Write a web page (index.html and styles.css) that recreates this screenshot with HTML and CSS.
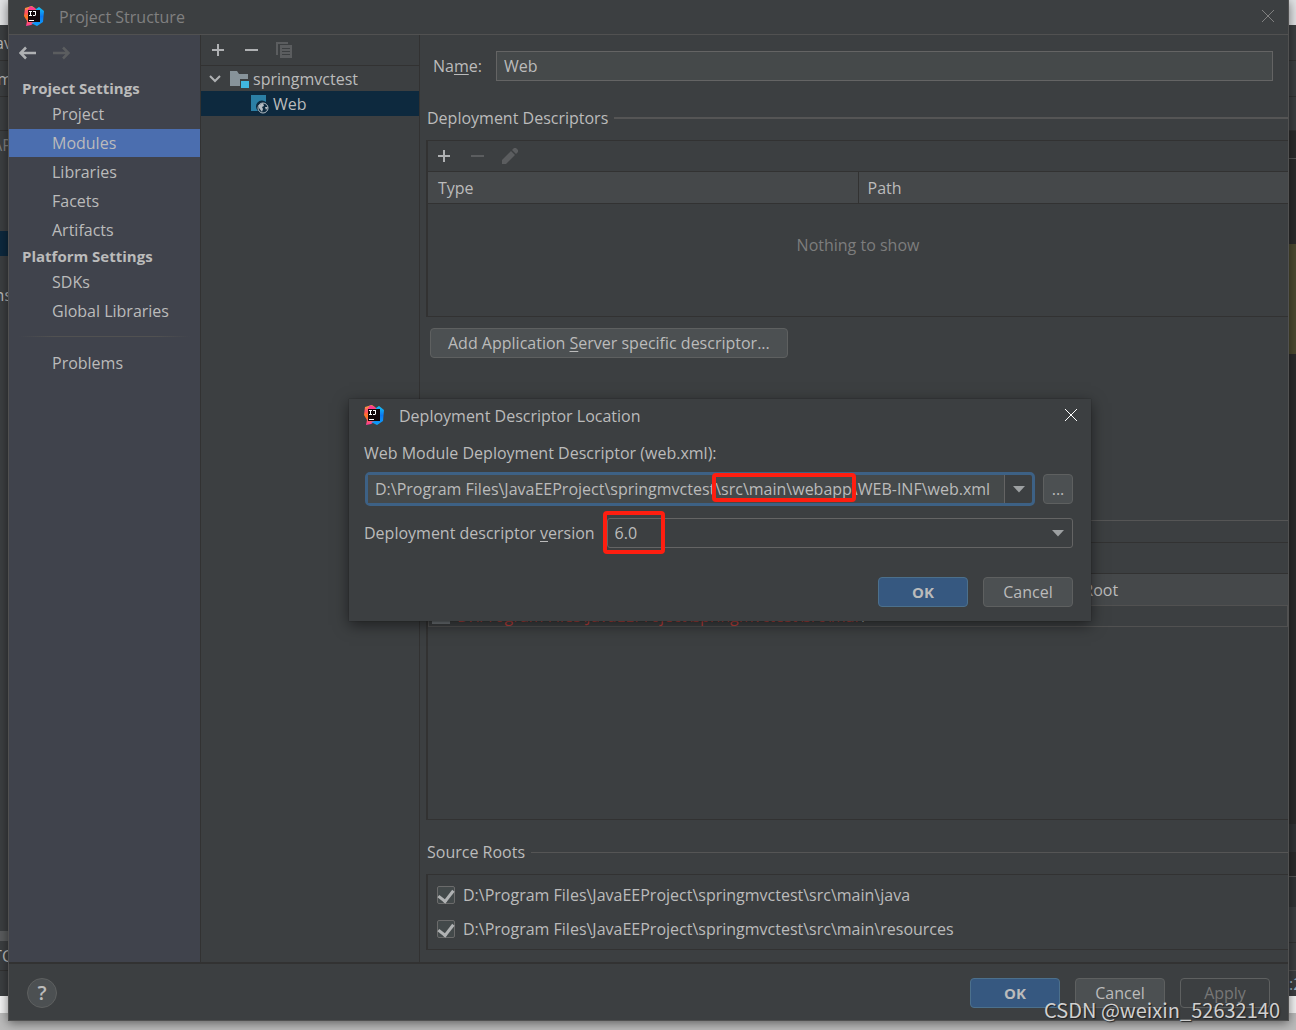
FILE: index.html
```html
<!DOCTYPE html>
<html lang="en">
<head>
<meta charset="utf-8">
<title>Project Structure</title>
<link rel="stylesheet" href="styles.css">
</head>
<body>
<svg class="defs" aria-hidden="true">
  <defs>
    <linearGradient id="warm" x1="0" y1="0" x2="0" y2="1">
      <stop offset="0" stop-color="#ffb02e"/><stop offset=".3" stop-color="#ff4d6a"/><stop offset=".55" stop-color="#ff7a1a"/><stop offset="1" stop-color="#ff3aa0"/>
    </linearGradient>
    <linearGradient id="cool" x1="0" y1="0" x2="0" y2="1">
      <stop offset="0" stop-color="#17c4f5"/><stop offset=".5" stop-color="#0a78f2"/><stop offset="1" stop-color="#0fa2fb"/>
    </linearGradient>
  </defs>
  <symbol id="idea" viewBox="0 0 20 20">
    <path fill="url(#warm)" d="M1 2 8 0l4 3v13l-5 3-5 1 1-5-3-5z"/>
    <path fill="#fc3d8f" d="M6 0l5 2 1 3H3z"/>
    <path fill="url(#cool)" d="M12 3l3-2 5 4-1 11-6 4-6-3 4-1z"/>
    <path fill="#130709" d="M4 4h12v12H4z"/>
    <path fill="#fff" d="M5 5h3v1H7v3h1v1H5V9h1V6H5zM9 5h3v4l-1 1H9V9h2V6H9zM5 14h5v1H5z"/>
  </symbol>
  <symbol id="plus" viewBox="0 0 16 16"><path fill="currentColor" d="M7 2h2v5h5v2H9v5H7V9H2V7h5z"/></symbol>
  <symbol id="minus" viewBox="0 0 16 16"><path fill="currentColor" d="M2 7h13v2H2z"/></symbol>
  <symbol id="arrow" viewBox="0 0 18 14"><path fill="none" stroke="currentColor" stroke-width="2.500" d="M17 7H2M7 1.500 1.500 7 7 12.500"/></symbol>
  <symbol id="cross" viewBox="0 0 14 14"><path fill="none" stroke="currentColor" d="M1 1l12 12M13 1 1 13"/></symbol>
  <symbol id="down" viewBox="0 0 12 8"><path fill="#9da0a2" d="M0 1h12L6 7.500z"/></symbol>
</svg>

<div class="desktop">
  <div class="ide ide-left" aria-hidden="true">
    <div class="band b25 light"></div>
    <div class="band b36 line">av</div>
    <div class="band b36 line">m</div>
    <div class="band b34 line"></div>
    <div class="band b28 dim">\P</div>
    <div class="band b72"></div>
    <div class="band b25 navy"></div>
    <div class="band b25"></div>
    <div class="band b28">ns</div>
    <div class="band grow"></div>
    <div class="band b10 thumb"></div>
    <div class="band b30 line">TC</div>
    <div class="band b25"></div>
    <div class="band b17 white"></div>
    <div class="band b17 grey"></div>
  </div>

  <main class="window">
    <header class="titlebar">
      <svg class="logo"><use href="#idea"/></svg>
      <h1>Project Structure</h1>
      <button class="plain close" aria-label="Close"><svg class="x"><use href="#cross"/></svg></button>
    </header>

    <div class="panes">
      <nav class="sidebar">
        <div class="history">
          <button class="plain" aria-label="Back"><svg class="arrow"><use href="#arrow"/></svg></button>
          <button class="plain" aria-label="Forward" disabled><svg class="arrow flip"><use href="#arrow"/></svg></button>
        </div>
        <h2>Project Settings</h2>
        <ul>
          <li><a href="#project">Project</a></li>
          <li><a href="#modules" class="active">Modules</a></li>
          <li><a href="#libraries">Libraries</a></li>
          <li><a href="#facets">Facets</a></li>
          <li><a href="#artifacts">Artifacts</a></li>
        </ul>
        <h2>Platform Settings</h2>
        <ul>
          <li><a href="#sdks">SDKs</a></li>
          <li><a href="#global">Global Libraries</a></li>
        </ul>
        <hr>
        <ul>
          <li><a href="#problems">Problems</a></li>
        </ul>
      </nav>

      <section class="tree">
        <div class="tools">
          <button class="plain" aria-label="Add"><svg class="i16"><use href="#plus"/></svg></button>
          <button class="plain" aria-label="Remove"><svg class="i16"><use href="#minus"/></svg></button>
          <button class="plain" aria-label="Copy" disabled><svg class="i16" viewBox="0 0 16 16"><path fill="currentColor" d="M0 0h12v2H2v11H0zM4 3h12v13H4z"/><path stroke="#3c3f41" d="M6 6.500h8M6 9.500h8M6 12.500h8"/></svg></button>
        </div>
        <div class="node">
          <svg class="chev" viewBox="0 0 12 8"><path fill="none" stroke="#afb1b3" stroke-width="2" d="M1 1l5 5 5-5"/></svg>
          <svg class="i20" viewBox="0 0 20 20"><path fill="#87939a" d="M1 2h7l2 3h9v5h-8v7H1z"/><path fill="#40b6e0" d="M12 12h8v7h-8z"/></svg>
          <span>springmvctest</span>
        </div>
        <div class="node child">
          <svg class="i20" viewBox="0 0 20 20"><path fill="#2b7fa5" d="M2 1h15v7a6 6 0 0 0-8 9H2z"/><circle cx="14" cy="14" r="5" fill="#0d293e" stroke="#b5bdc3"/><path fill="#b5bdc3" d="M10 11l4-2 1 3-2 1 1 2-1 3-3-4zM16 13l3 0-2 3z"/></svg>
          <span>Web</span>
        </div>
      </section>

      <section class="content">
        <div class="field">
          <label for="name">Na<u>m</u>e:</label>
          <input id="name" type="text" value="Web">
        </div>

        <h3 class="deploy">Deployment Descriptors</h3>
        <div class="box descriptors">
          <div class="tools">
            <button class="plain" aria-label="Add"><svg class="i16"><use href="#plus"/></svg></button>
            <button class="plain" aria-label="Remove" disabled><svg class="i16"><use href="#minus"/></svg></button>
            <button class="plain" aria-label="Edit" disabled><svg class="i18" viewBox="0 0 18 18"><path fill="currentColor" d="M0 13 9 4l4 4-9 9H0zM10 3l2-2h2l2 2v2l-2 2z"/></svg></button>
          </div>
          <table>
            <thead><tr><th>Type</th><th>Path</th></tr></thead>
            <tbody><tr><td colspan="2" class="empty">Nothing to show</td></tr></tbody>
          </table>
        </div>
        <button class="btn specific">Add Application <u>S</u>erver specific descriptor...</button>

        <h3 class="web">Web Resource Directories</h3>
        <div class="box resources">
          <div class="tools">
            <button class="plain" aria-label="Add"><svg class="i16"><use href="#plus"/></svg></button>
            <button class="plain" aria-label="Remove"><svg class="i16"><use href="#minus"/></svg></button>
          </div>
          <table>
            <thead><tr><th>Web Resource Directory</th><th>Path Relative to Deployment Root</th></tr></thead>
            <tbody><tr class="row"><td><div class="missing"><svg class="i18" viewBox="0 0 18 18"><path fill="#6e7478" d="M0 2h7l2 3h9v12H0z"/></svg><span>D:\Program Files\JavaEEProject\springmvctest\src\mai</span></div></td><td>/</td></tr></tbody>
          </table>
        </div>

        <h3 class="source">Source Roots</h3>
        <div class="box roots">
          <label><input type="checkbox" checked>D:\Program Files\JavaEEProject\springmvctest\src\main\java</label>
          <label><input type="checkbox" checked>D:\Program Files\JavaEEProject\springmvctest\src\main\resources</label>
        </div>
      </section>
    </div>

    <footer class="footer">
      <button class="help" aria-label="Help">?</button>
      <button class="btn primary">OK</button>
      <button class="btn">Cancel</button>
      <button class="btn" disabled>Apply</button>
    </footer>
  </main>

  <div class="ide ide-right" aria-hidden="true">
    <div class="band b25 light"></div>
    <div class="band b36 line"></div>
    <div class="band b36 line"></div>
    <div class="band b34 line"></div>
    <div class="band b28 code rule"></div>
    <div class="band b85 code"></div>
    <div class="band b110 olive"></div>
    <div class="band grow code"></div>
    <div class="band b28 shade"></div>
    <div class="band b25 code rule"></div>
    <div class="band b30 shade"></div>
    <div class="band b36 line"></div>
    <div class="band b28 rule"></div>
    <div class="band b25 tail">:2</div>
    <div class="band b17 white"></div>
    <div class="band b17 grey"></div>
  </div>
</div>

<div class="dialog" role="dialog" aria-labelledby="dlg-title">
  <header>
    <svg class="logo"><use href="#idea"/></svg>
    <h2 id="dlg-title">Deployment Descriptor Location</h2>
    <button class="plain close" aria-label="Close"><svg class="x"><use href="#cross"/></svg></button>
  </header>
  <label class="caption" for="path">Web Module Deployment Descriptor (web.xml):</label>
  <div class="path-row">
    <div class="combo">
      <input id="path" type="text" value="D:\Program Files\JavaEEProject\springmvctest\src\main\webapp\WEB-INF\web.xml">
      <button class="plain" aria-label="Recent paths"><svg class="tri"><use href="#down"/></svg></button>
    </div>
    <button class="btn browse" aria-label="Browse">...</button>
    <span class="mark mark-path"></span>
  </div>
  <div class="version-row">
    <label for="version">Deployment descriptor <u>v</u>ersion</label>
    <div class="select">
      <select id="version"><option>6.0</option></select>
      <svg class="tri"><use href="#down"/></svg>
      <span class="mark mark-version"></span>
    </div>
  </div>
  <div class="actions">
    <button class="btn primary">OK</button>
    <button class="btn">Cancel</button>
  </div>
</div>

<div class="watermark">CSDN @weixin_52632140</div>
</body>
</html>
```
FILE: styles.css
```css
* { box-sizing: border-box; }

body {
  margin: 0;
  background: #bbbbbb;
  color: #bbbbbb;
  font: 16px/20px "Open Sans", "Noto Sans", sans-serif;
}

h1, h2, h3, ul { margin: 0; padding: 0; font-size: 16px; font-weight: 400; }
ul { list-style: none; }
button, input, select { font: inherit; color: inherit; margin: 0; }
svg { display: block; flex: none; }
u { text-underline-offset: 2px; }
.defs { position: absolute; width: 0; height: 0; }

.desktop { display: flex; min-height: 100vh; }

/* Slivers of the editor behind the window */
.ide { display: flex; flex-direction: column; flex: none; overflow: hidden; background: #3c3f41; white-space: nowrap; }
.ide-left { width: 8px; }
.ide-right { width: 7px; }
.band { flex: none; display: flex; align-items: center; justify-content: flex-end; }
.ide-left .band { margin-right: -4px; }
.ide-right .band { justify-content: flex-start; }
.ide .grow { flex: 1; }
.b10 { height: 10px; }
.b17 { height: 17px; }
.b25 { height: 25px; }
.b28 { height: 28px; }
.b30 { height: 30px; }
.b34 { height: 34px; }
.b36 { height: 36px; }
.b72 { height: 72px; }
.b85 { height: 85px; }
.b110 { height: 110px; }
.line { border-bottom: 1px solid #323232; }
.rule { border-bottom: 1px solid #555555; }
.light { background: #e2e3e5; }
.dim { color: #808080; }
.navy { background: #0d293e; }
.thumb { background: #5a5c5e; }
.code { background: #2b2b2b; }
.shade { background: #313335; }
.olive { background: #4c4a30; }
.tail { color: #9fb6c9; }
.white { background: #f4f4f4; }
.grey { background: #bbbbbb; }

.window {
  position: relative;
  flex: 1;
  min-width: 0;
  display: flex;
  flex-direction: column;
  margin-bottom: 9px;
  background: #3c3f41;
  border: 1px solid #515151;
  border-top: 0;
  box-shadow: 0 2px 10px rgba(0, 0, 0, .5);
}

.plain { display: flex; padding: 0; border: 0; background: none; color: #afb1b3; }
.plain:disabled { color: #5b5d5f; }
.logo { width: 20px; height: 20px; }
.x { width: 14px; height: 14px; }
.i16 { width: 16px; height: 16px; }
.i18 { width: 18px; height: 18px; }
.i20 { width: 20px; height: 20px; }
.tri { width: 12px; height: 8px; }
.close { margin-left: auto; }

.titlebar { display: flex; align-items: center; gap: 15px; height: 35px; padding: 0 13px 3px 15px; border-bottom: 1px solid #515151; }
.titlebar h1 { color: #808080; padding-top: 2px; }
.titlebar .close { color: #808080; }

.panes { flex: 1; display: flex; min-height: 0; }

.sidebar { flex: none; width: 192px; background: #40434c; border-right: 1px solid #323232; }
.history { display: flex; gap: 15px; height: 41px; padding: 11px 10px; }
.arrow { width: 18px; height: 14px; }
.flip { transform: scaleX(-1); }
.sidebar h2 { height: 24px; padding-left: 13px; font-size: 15px; font-weight: 700; line-height: 24px; }
.sidebar ul { display: grid; gap: 1px; }
.sidebar a { display: block; padding-left: 43px; color: inherit; line-height: 28px; text-decoration: none; }
.sidebar .active { background: #4b6eaf; }
.sidebar hr { height: 1px; margin: 11px 10px 12px; border: 0; background: linear-gradient(90deg, transparent, #515151 20%, #515151 80%, transparent); }

.tree { flex: none; width: 219px; border-right: 1px solid #323232; }
.tools { display: flex; align-items: center; gap: 17px; height: 31px; padding: 0 8px; border-bottom: 1px solid #323232; }
.tree .tools { padding: 0 9px; }
.node { display: flex; align-items: center; height: 25px; padding-left: 8px; }
.chev { width: 12px; height: 8px; margin-right: 8px; }
.node span { padding-left: 4px; }
.child { padding-left: 48px; background: #0d293e; }

.content { flex: 1; min-width: 0; display: flex; flex-direction: column; padding: 16px 0 12px 6px; }
.field { display: flex; align-items: center; gap: 14px; padding: 0 15px 0 7px; }
.field input { flex: 1; min-width: 0; height: 30px; padding: 0 7px; border: 1px solid #646464; background: #45494a; }
.content h3 { display: flex; align-items: center; gap: 6px; height: 20px; margin: 27px 0 12px 1px; }
.content h3::after { content: ""; flex: 1; height: 1px; background: #555555; }
.content .deploy::after { height: 2px; }
.content .web { margin-top: 152px; }
.content .source { margin-top: 22px; }

.box { border: 1px solid #323232; border-left-width: 2px; border-right: 0; }
.box table { width: 100%; table-layout: fixed; border-collapse: collapse; }
.box th { height: 31px; padding: 2px 10px 0; background: #45484a; border-bottom: 1px solid #323232; font-weight: 400; text-align: left; }
.box th + th { padding-left: 9px; border-left: 1px solid #323232; }
.descriptors .empty { height: 83px; padding: 0; color: #7d7d7d; text-align: center; }
.descriptors { height: 177px; }
.resources { flex: 1; min-height: 200px; }
.row { outline: 1px solid #515151; outline-offset: -1px; }
.row td { height: 22px; padding: 0 4px; overflow: hidden; }
.missing { display: flex; align-items: center; gap: 7px; color: #bc3f3c; white-space: nowrap; }
.roots { display: flex; flex-direction: column; padding: 3px 9px; }
.roots label { display: flex; align-items: center; gap: 8px; height: 34px; }

input[type="checkbox"] { appearance: none; display: grid; place-items: center; width: 18px; height: 18px; border: 1px solid #6b6b6b; border-radius: 2px; background: #43494a; }
input[type="checkbox"]:checked::before { content: ""; width: 7px; height: 12px; margin-bottom: 3px; border: solid #b0b2b3; border-width: 0 3px 3px 0; transform: rotate(38deg); }

.btn { min-width: 90px; height: 30px; padding: 0 17px; border: 1px solid #5e6060; border-radius: 4px; background: #4c5052; }
.btn:disabled { background: none; color: #777777; }
.primary { border-color: #4c708c; background: #365880; font-weight: 700; font-size: 15px; }
.specific { align-self: flex-start; margin: 11px 0 0 4px; }

.footer { display: flex; align-items: center; gap: 15px; height: 58px; padding: 2px 18px 0; border-top: 2px solid #323232; }
.help { width: 30px; height: 30px; margin-right: auto; padding: 0; border: 1px solid #5e6060; border-radius: 50%; background: #4c5052; font-size: 20px; font-weight: 600; }

/* Floating dialog */
.dialog { position: absolute; left: 349px; top: 399px; width: 742px; padding: 5px 18px 14px 15px; background: #3c3f41; box-shadow: 0 0 1px #222222, 0 4px 14px rgba(0, 0, 0, .5); }
.dialog header { display: flex; align-items: center; gap: 15px; height: 22px; }
.dialog h2 { padding-top: 2px; }
.dialog .close { margin-right: -5px; color: #ffffff; }
.caption { display: block; margin: 17px 0 9px; }
.path-row { position: relative; display: flex; align-items: center; gap: 8px; }
.combo { flex: 1; display: flex; height: 34px; margin-left: 1px; border: 3px solid #3d6185; border-radius: 5px; background: #3c3f41; }
.combo input { flex: 1; min-width: 0; padding: 0 7px; border: 0; border-right: 1px solid #646464; background: #45494a; outline: 0; }
.combo button { width: 27px; align-items: center; justify-content: center; }
.browse { min-width: 0; width: 30px; padding: 0; }
.version-row { display: flex; align-items: center; gap: 12px; margin-top: 12px; }
.select { position: relative; flex: 1; }
.select select { display: block; appearance: none; width: 100%; height: 30px; padding: 0 7px; border: 1px solid #646464; border-radius: 3px; background: #3c3f41; }
.select .tri { position: absolute; right: 9px; top: 11px; }
.actions { display: flex; justify-content: flex-end; gap: 15px; margin-top: 29px; }

.mark { position: absolute; border: 4px solid #ff1e10; border-radius: 4px; }
.mark-path { left: 348px; top: 1px; width: 144px; height: 29px; }
.mark-version { left: -4px; top: -7px; width: 62px; height: 43px; }

.watermark { position: absolute; right: 16px; bottom: 8px; color: #d0d0d0; font: 20px/24px "Noto Sans CJK SC", "Noto Sans", sans-serif; text-shadow: 1px 1px 1px #222222; }
```
